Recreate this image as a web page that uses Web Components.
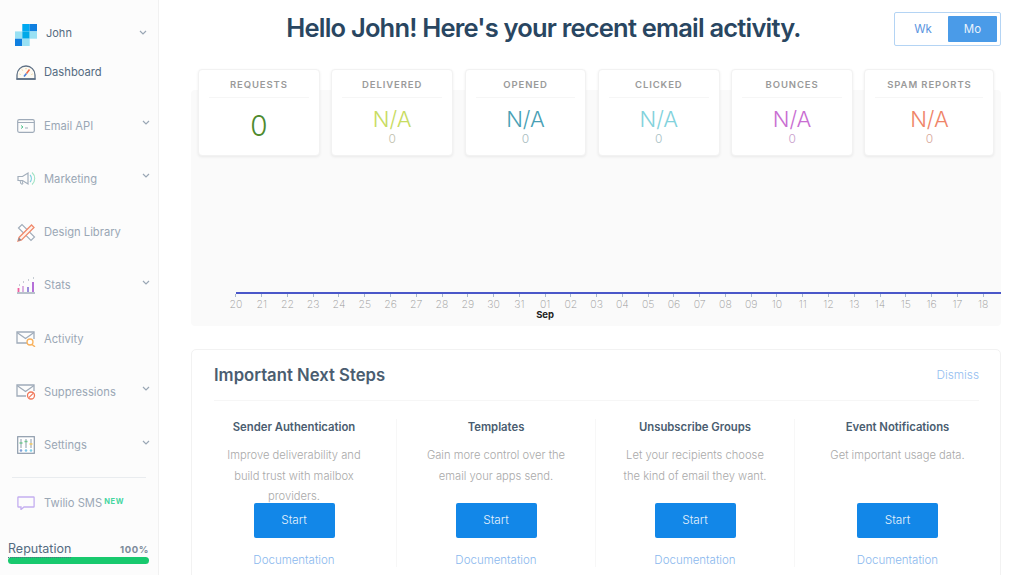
<!DOCTYPE html>
<html>
<head>
<meta charset="utf-8">
<style>
  html,body{margin:0;padding:0;height:575px;overflow:hidden;background:#fff;font-family:Inter,"Liberation Sans",sans-serif;}
</style>
</head>
<body>
<app-shell>
  <side-bar slot="side">
    <nav-item label="Dashboard" active>
      <svg viewBox="0 0 20 15" width="20" height="15"><path d="M1 14v-4a9 9 0 0 1 18 0v4z" fill="#fdfaf2" stroke="#5f7186" stroke-width="1.300"/><path d="M.5 14h19" stroke="#5f7186" stroke-width="1.600"/><path d="M8 11.500l2.500-3" stroke="#4a7fd8" stroke-width="1.600"/><path d="M10.500 8.500l3-4" stroke="#ef6b4a" stroke-width="1.600"/><path d="M3.500 9l1 .5M6 4.500l.6 1M10 3v1.200M16.500 9l-1 .5" stroke="#e8c98a" stroke-width="1"/></svg>
    </nav-item>
    <nav-item label="Email API" chevron>
      <svg viewBox="0 0 18 14" width="18" height="14"><rect x=".7" y=".7" width="16.600" height="12.600" rx="1.500" fill="none" stroke="#9fabb9" stroke-width="1.200"/><path d="M1 3.500h16" stroke="#9fabb9"/><path d="M4 6.500l2 1.500-2 1.500" fill="none" stroke="#4fc08d"/><path d="M8 9h3" stroke="#9fabb9"/></svg>
    </nav-item>
    <nav-item label="Marketing" chevron>
      <svg viewBox="0 0 19 15" width="19" height="15"><path d="M1 5.500h4.500L11 2v11L5.500 9.500H1z" fill="none" stroke="#a2aebb" stroke-width="1.200"/><path d="M3 9.500l1 3.500h2l-1-3.500" fill="none" stroke="#a2aebb"/><path d="M13 4a5 5 0 0 1 0 7" fill="none" stroke="#7fcfe0" stroke-width="1.100"/><path d="M15 1.500a8 8 0 0 1 0 12" fill="none" stroke="#9fe3c2" stroke-width="1.100"/></svg>
    </nav-item>
    <nav-item label="Design Library">
      <svg viewBox="0 0 19 19" width="19" height="19"><path d="M1.500 5L5 1.500 17.500 14 14 17.500z" fill="#fff" stroke="#a2aebb" stroke-width="1.200"/><path d="M2 14.500L14.500 2 17 4.500 4.500 17 1 18z" fill="#fdf3ee" stroke="#f08a6c" stroke-width="1.300"/><path d="M1 18l1-3.500 2.500 2.500z" fill="#7f8c9b"/></svg>
    </nav-item>
    <nav-item label="Stats" chevron>
      <svg viewBox="0 0 19 18" width="19" height="18"><path d="M0 17h18" stroke="#a2aebb" stroke-width="1.500"/><path d="M1.500 16v-4" stroke="#ef5fa0" stroke-width="1.800"/><path d="M6 16v-6" stroke="#d9a8e0" stroke-width="1.800"/><path d="M11 16v-5" stroke="#8f80d8" stroke-width="1.800"/><path d="M16 16V6" stroke="#b56fd8" stroke-width="2"/><path d="M2 9h.9M6 6h.9M11 4h.9M16 2h.9" stroke="#8391a1" stroke-width="1"/></svg>
    </nav-item>
    <nav-item label="Activity">
      <svg viewBox="0 0 20 16" width="20" height="16"><path d="M11 12H1V1h17v7" fill="none" stroke="#9fabb9" stroke-width="1.300"/><path d="M1 1.500l8.500 6 8.500-6" fill="none" stroke="#9fabb9" stroke-width="1.200"/><circle cx="14" cy="11" r="3" fill="#fff" stroke="#f8b15c" stroke-width="1.300"/><path d="M16 13.500l3 2.300" stroke="#f8b15c" stroke-width="1.400"/></svg>
    </nav-item>
    <nav-item label="Suppressions" chevron>
      <svg viewBox="0 0 20 16" width="20" height="16"><path d="M10 12H1V1h17v6" fill="none" stroke="#9fabb9" stroke-width="1.300"/><path d="M1 1.500l8.500 6 8.500-6" fill="none" stroke="#9fabb9" stroke-width="1.200"/><circle cx="15" cy="11.500" r="3.500" fill="#fff" stroke="#f0775a" stroke-width="1.300"/><path d="M12.800 13.700l4.400-4.400" stroke="#f0775a" stroke-width="1.200"/></svg>
    </nav-item>
    <nav-item label="Settings" chevron>
      <svg viewBox="0 0 18 18" width="18" height="18"><rect x=".7" y=".7" width="16.600" height="16.600" fill="#fff" stroke="#8d9bab" stroke-width="1.200"/><path d="M4 3v9M9 3v9M14 3v9" stroke="#8d9bab"/><path d="M2.500 7h3M7.500 5.500h3" stroke="#6fc58e" stroke-width="1.500"/><path d="M12.500 8h3" stroke="#f4c95d" stroke-width="1.500"/><circle cx="4" cy="14.500" r="1.300" fill="#7f9fd8"/><circle cx="9" cy="14.500" r="1.300" fill="#7fc6e8"/><circle cx="14" cy="14.500" r="1.300" fill="#7fd0e8"/></svg>
    </nav-item>
  </side-bar>
  <dash-main></dash-main>
</app-shell>

<script>
const chevron = `<svg viewBox="0 0 8 5" width="8" height="5"><path d="M1 1l3 3 3-3" fill="none" stroke="#9aa7b5" stroke-width="1.200"/></svg>`;

class AppShell extends HTMLElement {
    constructor(){
        super();
        this.attachShadow({mode:'open'});
        this.shadowRoot.innerHTML = `
        <style>
        :host{display:flex;width:1024px;height:575px;overflow:hidden;}
        .content{flex:1;min-width:0;}
        </style>
        <slot name="side"></slot>
        <div class="content"><slot></slot></div>`;
    }
}

class SideBar extends HTMLElement {
    constructor(){
        super();
        this.attachShadow({mode:'open'});
        this.shadowRoot.innerHTML = `
        <style>
        :host{display:flex;flex-direction:column;flex:none;box-sizing:border-box;width:159px;height:575px;background:#fcfcfc;border-right:1px solid #f1f1f1;color:#8d9bab;overflow:hidden;}
        .account{display:flex;align-items:center;height:22px;margin-top:24px;padding:0 11px 0 15px;font-size:11px;color:#546b81;}
        .account svg{flex:none;}
        .account span{flex:1;margin-left:9px;position:relative;top:-2px;}
        .account .chev{flex:none;margin:0;top:-3px;display:flex;}
        .nav{margin-top:-1px;}
        hr{border:0;border-top:1px solid #e9ecef;margin:5px 12px 0 12px;}
        .reputation{padding:0 9px 0 8px;margin-top:14px;}
        .rep-head{display:flex;justify-content:space-between;align-items:baseline;height:15px;}
        .rep-head span:first-child{font-size:12.500px;color:#546b81;border-bottom:1px dotted #546b81;line-height:14px;height:15px;}
        .rep-head span:last-child{font-size:9.500px;font-weight:700;letter-spacing:.6px;color:#7b8a99;}
        .bar{height:7px;border-radius:4px;background:#18c96e;}
        </style>
        <div class="account">
          <svg viewBox="0 0 22 22" width="22" height="22">
            <rect x="7.300" y="0" width="7.400" height="7.400" fill="#00a9f1"/><rect x="14.700" y="0" width="7.300" height="7.400" fill="#0f7fe0"/>
            <rect x="0" y="7.400" width="7.300" height="7.300" fill="#99e1f4"/><rect x="7.300" y="7.400" width="7.400" height="7.300" fill="#00a9e8"/><rect x="14.700" y="7.400" width="7.300" height="7.300" fill="#99e1f4"/>
            <rect x="0" y="14.700" width="7.300" height="7.300" fill="#0f7fe0"/><rect x="7.300" y="14.700" width="7.400" height="7.300" fill="#99e1f4"/>
          </svg>
          <span>John</span><span class="chev">${chevron}</span>
        </div>
        <div class="nav"><slot></slot></div>
        <hr>
        <nav-item label="Twilio SMS" badge="NEW" compact>
          <svg viewBox="0 0 18 14" width="18" height="14"><path d="M1.500 1h15a.6.6 0 0 1 .6.6v8.800a.6.6 0 0 1-.6.6H7l-3 2.500V11H1.500a.6.6 0 0 1-.6-.6V1.600a.6.6 0 0 1 .6-.6z" fill="none" stroke="#c4aef0" stroke-width="1.300"/></svg>
        </nav-item>
        <div class="reputation">
          <div class="rep-head"><span>Reputation</span><span>100%</span></div>
          <div class="bar"></div>
        </div>`;
    }
}

class NavItem extends HTMLElement {
    constructor(){
        super();
        this.attachShadow({mode:'open'});
    }
    render(){
        const label = this.getAttribute('label');
        const badge = this.getAttribute('badge');
        const active = this.hasAttribute('active');
        this.shadowRoot.innerHTML = `
        <style>
        :host{display:flex;align-items:center;height:53.250px;padding:0 8px 0 16px;box-sizing:border-box;font-size:11.200px;color:${active ? '#546b81' : '#9aa7b5'};}
        :host([active]){height:54px;}
        :host([compact]){height:50px;}
        .ico{flex:none;width:20px;display:flex;justify-content:center;align-items:center;}
        .lbl{margin-left:8px;flex:1;white-space:nowrap;position:relative;}
        .new{font-size:7.500px;font-weight:700;color:#45d6a0;letter-spacing:.6px;position:relative;top:-3px;margin-left:-1px;}
        .chev{display:flex;margin-top:-6px;}
        </style>
        <span class="ico"><slot></slot></span>
        <span class="lbl">${label}${badge ? ` <span class="new">${badge}</span>` : ''}</span>
        ${this.hasAttribute('chevron') ? `<span class="chev">${chevron}</span>` : ''}`;
    }
    connectedCallback(){
        this.render();
    }
}

class RangeToggle extends HTMLElement {
    constructor(){
        super();
        this.attachShadow({mode:'open'});
        this.shadowRoot.innerHTML = `
        <style>
        :host{display:flex;box-sizing:border-box;width:107px;height:34px;border:1px solid #b4d4f4;border-radius:2px;padding:3px;font-size:11.500px;}
        div{flex:1;display:flex;align-items:center;justify-content:center;color:#5b94e0;padding-bottom:1px;}
        .on{flex:none;width:49px;background:#4a9be8;color:#e8f2fc;border-radius:1px;}
        </style>
        <div>Wk</div><div class="on">Mo</div>`;
    }
}

class StatCard extends HTMLElement {
    constructor(){
        super();
        this.attachShadow({mode:'open'});
    }
    connectedCallback(){
        const big = this.hasAttribute('big');
        this.shadowRoot.innerHTML = `
        <style>
        :host{display:block;box-sizing:border-box;flex:none;width:121.800px;height:87px;background:#fff;border:1px solid #f2f2f2;border-radius:4px;box-shadow:0 1px 3px rgba(0,0,0,.07);text-align:center;padding:0 22px;}
        :host([wide]){width:130px;}
        .t{height:27px;line-height:30px;border-bottom:1px solid #f6f6f6;font-size:9.500px;font-weight:600;letter-spacing:.9px;color:#9a9a9a;white-space:nowrap;margin:0 -12px;}
        .v{font-size:${big ? 28 : 22}px;font-weight:300;line-height:${big ? 56 : 42}px;color:${this.getAttribute('color')};}
        .s{font-size:12px;font-weight:300;line-height:14px;margin-top:-8px;color:${this.getAttribute('sub') || '#b5b5b5'};}
        </style>
        <div class="t">${this.getAttribute('title')}</div>
        <div class="v">${this.getAttribute('value')}</div>
        ${big ? '' : `<div class="s">0</div>`}`;
    }
}

class ActivityChart extends HTMLElement {
    constructor(){
        super();
        this.attachShadow({mode:'open'});
    }
    connectedCallback(){
        const days = ['20','21','22','23','24','25','26','27','28','29','30','31','01','02','03','04','05','06','07','08','09','10','11','12','13','14','15','16','17','18'];
        const cells = days.map(d => `<div class="cell"><i></i><b>${d}</b>${d === '01' ? '<em>Sep</em>' : ''}</div>`).join('');
        this.shadowRoot.innerHTML = `
        <style>
        :host{display:block;box-sizing:border-box;height:236px;background:#fafafa;border-radius:4px;padding-top:202px;padding-left:32px;}
        .line{height:2px;background:#4a57c9;margin-left:13px;}
        .axis{display:flex;}
        .cell{flex:none;width:25.780px;display:flex;flex-direction:column;align-items:center;}
        i{display:block;width:1px;height:3px;background:#a9b8cc;}
        b{font-weight:200;font-size:10.500px;line-height:10px;color:#999;margin-top:3px;}
        em{font-style:normal;font-weight:700;font-size:9.500px;line-height:9px;color:#222;}
        </style>
        <div class="line"></div>
        <div class="axis">${cells}</div>`;
    }
}

class NextStep extends HTMLElement {
    constructor(){
        super();
        this.attachShadow({mode:'open'});
    }
    connectedCallback(){
        this.shadowRoot.innerHTML = `
        <style>
        :host{display:flex;flex-direction:column;align-items:center;box-sizing:border-box;border-right:1px solid #f7f7f7;text-align:center;}
        :host([last]){border-right:0;}
        h3{margin:0;font-size:11.300px;font-weight:600;line-height:16px;color:#4a5d70;white-space:nowrap;}
        p{margin:10px 0 0;width:150px;height:52px;font-size:11.200px;font-weight:300;line-height:20.700px;color:#a9a9a9;}
        .btn{box-sizing:border-box;width:81px;height:35px;flex:none;background:#1287e8;color:#e6f2fc;border-radius:2px;font-size:11.800px;font-weight:300;display:flex;align-items:center;justify-content:center;margin-top:6px;padding-bottom:1px;}
        a{margin-top:15px;font-size:11.500px;font-weight:300;line-height:14px;color:#8ab8ee;text-decoration:none;}
        </style>
        <h3>${this.getAttribute('title')}</h3>
        <p><slot></slot></p>
        <div class="btn">Start</div>
        <a href="#">Documentation</a>`;
    }
}

class NextSteps extends HTMLElement {
    constructor(){
        super();
        this.attachShadow({mode:'open'});
        this.shadowRoot.innerHTML = `
        <style>
        :host{display:block;box-sizing:border-box;height:260px;background:#fff;border:1px solid #f2f2f2;border-radius:5px;}
        .head{display:flex;align-items:center;justify-content:space-between;height:50px;margin:0 21px 0 22px;border-bottom:1px solid #f6f6f6;}
        h2{margin:0;font-size:16.700px;font-weight:600;color:#4a5d70;}
        a{font-size:11.800px;font-weight:300;color:#93bdf0;text-decoration:none;}
        .cols{display:grid;grid-template-columns:205px 199px 199px 205px;padding-top:18px;}
        </style>
        <div class="head"><h2>Important Next Steps</h2><a href="#">Dismiss</a></div>
        <div class="cols"><slot></slot></div>`;
    }
}

class DashMain extends HTMLElement {
    constructor(){
        super();
        this.attachShadow({mode:'open'});
        this.shadowRoot.innerHTML = `
        <style>
        :host{display:block;box-sizing:border-box;padding:0 23px 0 32px;height:575px;overflow:hidden;}
        header{display:flex;align-items:center;justify-content:space-between;height:58px;}
        h1{margin:0 -2px 4px 0;flex:1;text-align:center;font-size:25.500px;font-weight:600;letter-spacing:-.8px;color:#294661;}
        range-toggle{flex:none;}
        .stack{display:grid;margin-top:11px;}
        .stack > *{grid-area:1/1;}
        activity-chart{margin-top:21px;}
        .stats{display:flex;gap:11.500px;padding-left:7px;align-self:start;}
        next-steps{margin-top:23px;}
        </style>
        <header><h1>Hello John! Here's your recent email activity.</h1><range-toggle></range-toggle></header>
        <div class="stack">
          <activity-chart></activity-chart>
          <div class="stats">
            <stat-card title="REQUESTS" value="0" big color="#4e8a2e"></stat-card>
            <stat-card title="DELIVERED" value="N/A" color="#c8dc62" sub="#bfc1ae"></stat-card>
            <stat-card title="OPENED" value="N/A" color="#489fb5" sub="#a9bcc0"></stat-card>
            <stat-card title="CLICKED" value="N/A" color="#82d2dc" sub="#a9c2c6"></stat-card>
            <stat-card title="BOUNCES" value="N/A" color="#c96ed2" sub="#c9a0cc"></stat-card>
            <stat-card title="SPAM REPORTS" value="N/A" wide color="#ef8468" sub="#d8a89b"></stat-card>
          </div>
        </div>
        <next-steps>
          <next-step title="Sender Authentication">Improve deliverability and build trust with mailbox providers.</next-step>
          <next-step title="Templates">Gain more control over the email your apps send.</next-step>
          <next-step title="Unsubscribe Groups">Let your recipients choose the kind of email they want.</next-step>
          <next-step title="Event Notifications" last>Get important usage data.</next-step>
        </next-steps>`;
    }
}

customElements.define('nav-item', NavItem);
customElements.define('side-bar', SideBar);
customElements.define('app-shell', AppShell);
customElements.define('range-toggle', RangeToggle);
customElements.define('stat-card', StatCard);
customElements.define('activity-chart', ActivityChart);
customElements.define('next-step', NextStep);
customElements.define('next-steps', NextSteps);
customElements.define('dash-main', DashMain);
</script>
</body>
</html>
